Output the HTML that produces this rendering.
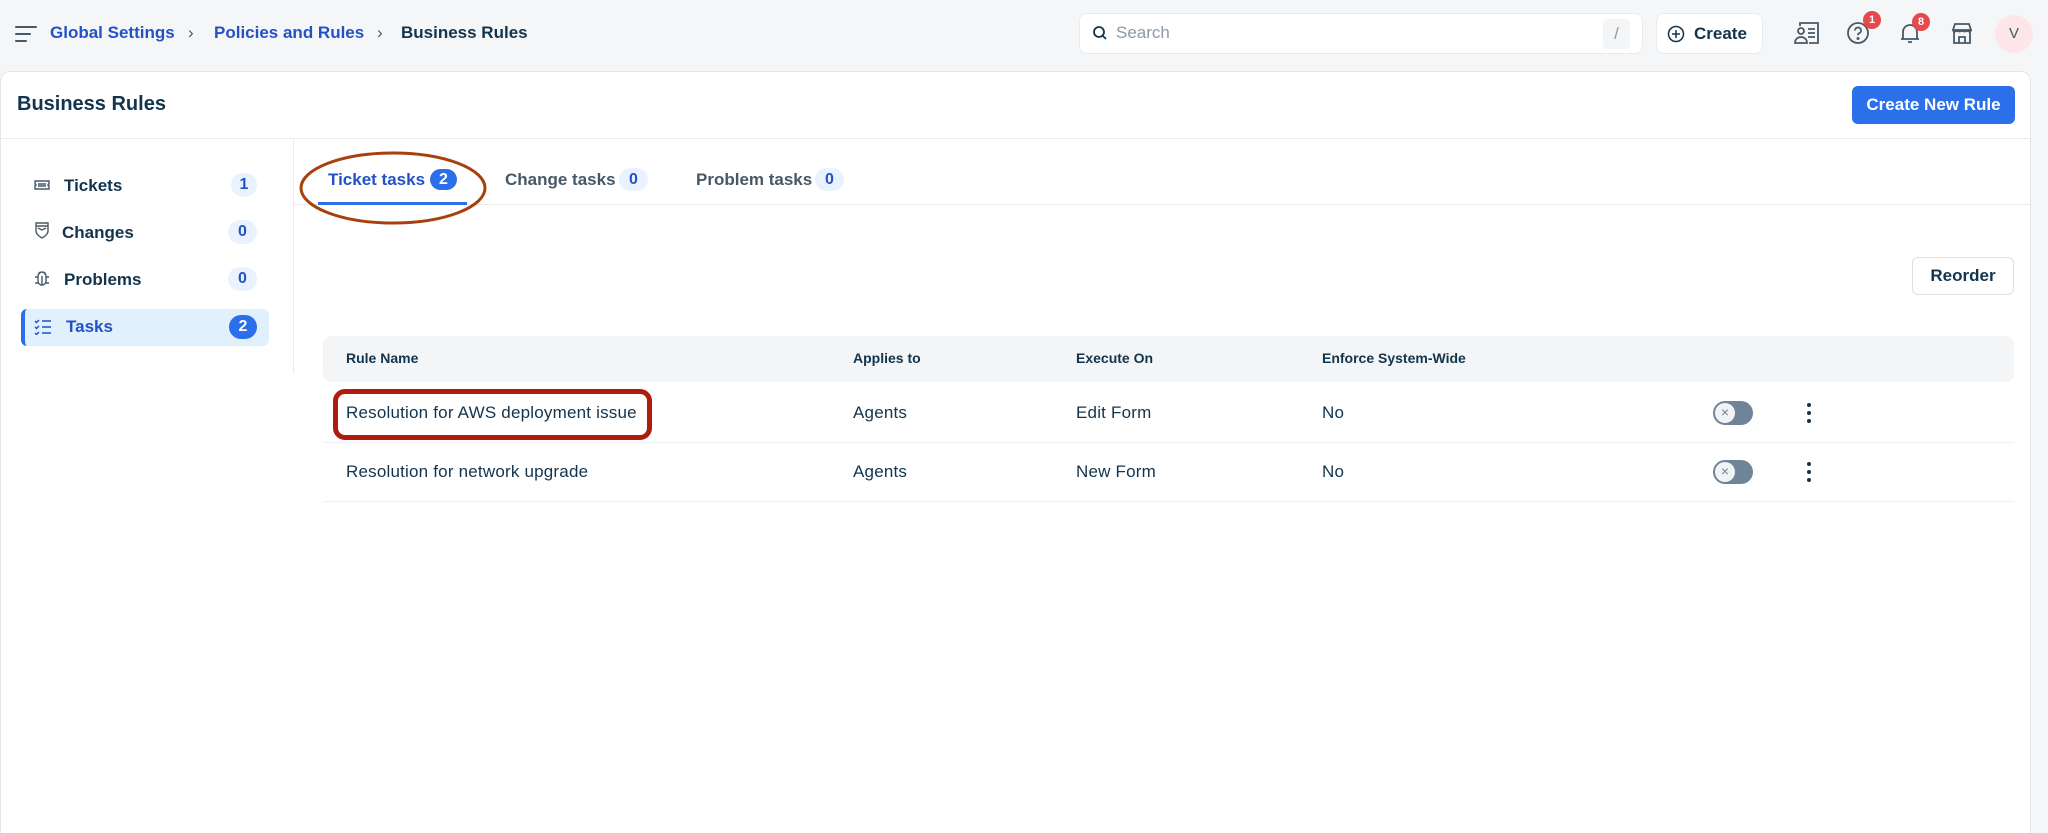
<!DOCTYPE html>
<html><head><meta charset="utf-8"><style>
*{box-sizing:border-box;margin:0;padding:0}
html{width:2048px;height:833px;overflow:hidden}
body{width:2048px;height:833px;background:#f5f6f8;font-family:"Liberation Sans",sans-serif;color:#12344d;position:relative;overflow:hidden}
.a{position:absolute}
.bc{top:23px;font-size:17px;font-weight:bold}
.panel{left:0;top:71px;width:2031px;height:762px;background:#fff;border:1px solid #e3e6ea;border-bottom:none;border-radius:10px 10px 0 0}
.badge{position:absolute;height:24px;min-width:26px;border-radius:12px;background:#e8f3ff;color:#2451c6;font-size:16px;font-weight:bold;text-align:center;line-height:24px}
.side{left:64px;font-size:17px;font-weight:bold;color:#12344d}
.th{top:350px;font-size:14px;font-weight:bold;color:#12344d}
.td{font-size:17px;color:#12344d;letter-spacing:0.2px}
.tog{width:40px;height:24px;border-radius:12px;background:#6f8399}
.tog:after{content:"×";position:absolute;left:2px;top:2px;width:20px;height:20px;border-radius:50%;background:#f1f4f7;color:#6f8399;font-size:14px;line-height:19px;text-align:center}
.keb{width:4px;height:4px;border-radius:50%;background:#12344d;box-shadow:0 -8px 0 #12344d,0 8px 0 #12344d}
</style></head><body>
<svg class="a" style="left:15px;top:24px" width="22" height="20" viewBox="0 0 22 20"><path d="M1 3h20M1 10h14M1 17h10" stroke="#475867" stroke-width="2" fill="none" stroke-linecap="round"/></svg>
<div class="a bc" style="left:50px;color:#2451c6">Global Settings</div>
<div class="a bc" style="left:188px;color:#475867;font-weight:normal">›</div>
<div class="a bc" style="left:214px;color:#2451c6">Policies and Rules</div>
<div class="a bc" style="left:377px;color:#475867;font-weight:normal">›</div>
<div class="a bc" style="left:401px;color:#12344d">Business Rules</div>

<div class="a" style="left:1079px;top:13px;width:564px;height:41px;background:#fff;border:1px solid #e8ebee;border-radius:8px"></div>
<svg class="a" style="left:1092px;top:25px" width="16" height="16" viewBox="0 0 16 16"><circle cx="7" cy="7" r="5" stroke="#12344d" stroke-width="1.8" fill="none"/><path d="M11 11l3 3" stroke="#12344d" stroke-width="1.8"/></svg>
<div class="a" style="left:1116px;top:23px;font-size:17px;color:#8a99a8">Search</div>
<div class="a" style="left:1603px;top:19px;width:27px;height:30px;background:#f3f5f7;border-radius:4px;color:#8a99a8;text-align:center;line-height:30px;font-size:17px">/</div>

<div class="a" style="left:1656px;top:13px;width:107px;height:41px;background:#fff;border:1px solid #e8ebee;border-radius:8px"></div>
<svg class="a" style="left:1667px;top:25px" width="18" height="18" viewBox="0 0 18 18"><circle cx="9" cy="9" r="7.5" stroke="#12344d" stroke-width="1.5" fill="none"/><path d="M9 5v8M5 9h8" stroke="#12344d" stroke-width="1.5"/></svg>
<div class="a" style="left:1694px;top:24px;font-size:17px;font-weight:bold">Create</div>

<svg class="a" style="left:1794px;top:21px" width="26" height="24" viewBox="0 0 26 24" fill="none" stroke="#475867" stroke-width="1.8"><circle cx="7" cy="10" r="3"/><path d="M1 22c0-4 3-6 6-6s6 2 6 6z"/><path d="M6 5V2h18v20H15"/><path d="M14 8h7M14 12h7M14 16h7"/></svg>
<svg class="a" style="left:1846px;top:21px" width="24" height="24" viewBox="0 0 24 24" fill="none" stroke="#475867" stroke-width="1.8"><circle cx="12" cy="12" r="10"/><path d="M9 9.5a3 3 0 1 1 4 2.8c-1 .4-1 1-1 2"/><circle cx="12" cy="17.5" r=".6" fill="#475867"/></svg>
<div class="a" style="left:1863px;top:11px;width:18px;height:18px;border-radius:50%;background:#e5484d;color:#fff;font-size:11px;font-weight:bold;text-align:center;line-height:18px">1</div>
<svg class="a" style="left:1898px;top:21px" width="24" height="24" viewBox="0 0 24 24" fill="none" stroke="#475867" stroke-width="1.8"><path d="M5 18V11a7 7 0 0 1 14 0v7M3 18h18M10 21h4"/></svg>
<div class="a" style="left:1912px;top:13px;width:18px;height:18px;border-radius:50%;background:#e5484d;color:#fff;font-size:11px;font-weight:bold;text-align:center;line-height:18px">8</div>
<svg class="a" style="left:1950px;top:21px" width="24" height="24" viewBox="0 0 24 24" fill="none" stroke="#475867" stroke-width="1.8"><path d="M3 9l2-6h14l2 6z M3 9c0 2 4 2 4 0c0 2 5 2 5 0c0 2 5 2 5 0c0 2 4 2 4 0"/><path d="M4 11v11h16V11M9 22v-6h6v6"/></svg>
<div class="a" style="left:1995px;top:15px;width:38px;height:38px;border-radius:50%;background:#fde6ea;color:#475867;font-size:15px;text-align:center;line-height:38px">V</div>

<div class="a panel"></div>
<div class="a" style="left:17px;top:93px;font-size:20px;font-weight:bold">Business Rules</div>
<div class="a" style="left:1852px;top:86px;width:163px;height:38px;background:#2c6fea;border-radius:6px;color:#fff;font-size:17px;font-weight:bold;text-align:center;line-height:38px">Create New Rule</div>
<div class="a" style="left:1px;top:138px;width:2029px;height:1px;background:#e8ebee"></div>
<div class="a" style="left:293px;top:139px;width:1px;height:235px;background:#e8ebee"></div>

<svg class="a" style="left:34px;top:178px" width="16" height="14" viewBox="0 0 16 14" fill="none" stroke="#475867" stroke-width="1.4"><path d="M1 3h14v3a1 1 0 0 0 0 2v3H1V8a1 1 0 0 0 0-2z"/><path d="M4 6h8M4 8h8"/></svg>
<div class="a side" style="top:176px">Tickets</div><div class="badge" style="left:231px;top:173px">1</div>
<svg class="a" style="left:35px;top:222px" width="14" height="17" viewBox="0 0 14 17" fill="none" stroke="#475867" stroke-width="1.4"><path d="M1 1h12v8c0 4-6 7-6 7S1 13 1 9z M1 4h12M3 6l4 2 4-2"/></svg>
<div class="a side" style="left:62px;top:223px">Changes</div><div class="badge" style="left:228px;top:220px;width:29px">0</div>
<svg class="a" style="left:34px;top:270px" width="16" height="17" viewBox="0 0 16 17" fill="none" stroke="#475867" stroke-width="1.4"><path d="M4 6a4 4 0 0 1 8 0v5a4 4 0 0 1-8 0z M8 6v9M1 7h3M12 7h3M1 13h3M12 13h3M5 2l1 2M11 2l-1 2"/></svg>
<div class="a side" style="top:270px">Problems</div><div class="badge" style="left:228px;top:267px;width:29px">0</div>
<div class="a" style="left:21px;top:309px;width:248px;height:37px;background:#e1f0fd;border-radius:6px;border-left:4px solid #2c6fea"></div>
<svg class="a" style="left:34px;top:318px" width="18" height="17" viewBox="0 0 18 17" fill="none" stroke="#2451c6" stroke-width="1.5"><path d="M1 3l1.5 1.5L5 2M1 9l1.5 1.5L5 8M1 15l1.5 1.5L5 14M8 3h9M8 9h9M8 15h9"/></svg>
<div class="a side" style="left:66px;top:317px;color:#2451c6">Tasks</div><div class="badge" style="left:229px;top:315px;width:28px;background:#2c6fea;color:#fff">2</div>

<div class="a" style="left:294px;top:204px;width:1737px;height:1px;background:#e8ebee"></div>
<div class="a" style="left:328px;top:170px;font-size:17px;font-weight:bold;color:#2451c6">Ticket tasks</div>
<div class="badge" style="left:430px;top:169px;height:21px;line-height:21px;min-width:27px;background:#2c6fea;color:#fff">2</div>
<div class="a" style="left:318px;top:202px;width:149px;height:3px;background:#2c6fea"></div>
<div class="a" style="left:505px;top:170px;font-size:17px;font-weight:bold;color:#475867">Change tasks</div>
<div class="badge" style="left:619px;top:168px;height:23px;line-height:23px;width:29px">0</div>
<div class="a" style="left:696px;top:170px;font-size:17px;font-weight:bold;color:#475867">Problem tasks</div>
<div class="badge" style="left:815px;top:168px;height:23px;line-height:23px;width:29px">0</div>
<svg class="a" style="left:298px;top:150px" width="190" height="76" viewBox="0 0 190 76"><ellipse cx="95" cy="38" rx="92" ry="35" fill="none" stroke="#a8400e" stroke-width="3"/></svg>

<div class="a" style="left:1912px;top:257px;width:102px;height:38px;border:1px solid #dbe0e5;border-radius:6px;font-size:17px;font-weight:bold;text-align:center;line-height:36px">Reorder</div>

<div class="a" style="left:323px;top:336px;width:1691px;height:46px;background:#f3f5f7;border-radius:8px"></div>
<div class="a th" style="left:346px">Rule Name</div>
<div class="a th" style="left:853px">Applies to</div>
<div class="a th" style="left:1076px">Execute On</div>
<div class="a th" style="left:1322px">Enforce System-Wide</div>

<div class="a td" style="left:346px;top:403px">Resolution for AWS deployment issue</div>
<div class="a td" style="left:853px;top:403px">Agents</div>
<div class="a td" style="left:1076px;top:403px">Edit Form</div>
<div class="a td" style="left:1322px;top:403px">No</div>
<div class="a tog" style="left:1713px;top:401px"></div>
<div class="a keb" style="left:1807px;top:411px"></div>
<div class="a" style="left:333px;top:389px;width:319px;height:51px;border:5px solid #b01c0c;border-radius:12px"></div>
<div class="a" style="left:323px;top:442px;width:1691px;height:1px;background:#eef0f3"></div>

<div class="a td" style="left:346px;top:462px">Resolution for network upgrade</div>
<div class="a td" style="left:853px;top:462px">Agents</div>
<div class="a td" style="left:1076px;top:462px">New Form</div>
<div class="a td" style="left:1322px;top:462px">No</div>
<div class="a tog" style="left:1713px;top:460px"></div>
<div class="a keb" style="left:1807px;top:470px"></div>
<div class="a" style="left:323px;top:501px;width:1691px;height:1px;background:#eef0f3"></div>
</body></html>
